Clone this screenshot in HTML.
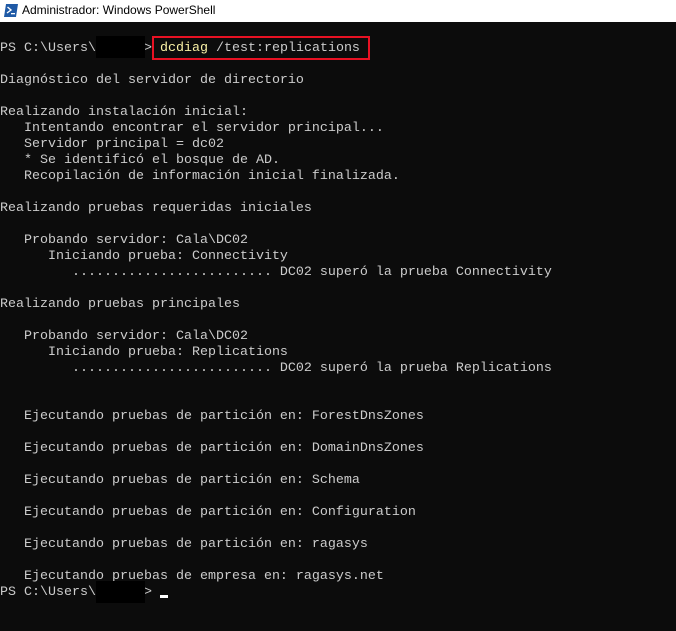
<!DOCTYPE html>
<html><head><meta charset="utf-8"><style>
html,body{margin:0;padding:0;}
body{width:676px;height:631px;background:#0c0c0c;position:relative;overflow:hidden;}
.title{position:absolute;left:0;top:0;width:676px;height:22px;background:#fff;}
.title span{position:absolute;left:22px;top:3px;font:12px "Liberation Sans",sans-serif;color:#000;}
pre{position:absolute;left:0;top:25px;margin:0;font-family:"Liberation Mono",monospace;font-size:13.33px;line-height:16px;color:#cccccc;letter-spacing:0;}
.red{position:absolute;left:152px;top:36px;width:214px;height:20px;border:2px solid #e81123;}
.blk{position:absolute;left:96px;width:49px;height:22px;background:#000;}
.cur{position:absolute;left:160px;top:595px;width:8px;height:3px;background:#fff;}
</style></head><body>
<div class="title">
<svg style="position:absolute;left:4px;top:4px" width="14" height="13" viewBox="0 0 14 13"><polygon points="2,0 14,0 12,13 0,13" fill="#1f5aa6"/><path d="M3.5,3 L7,6 L3,9" stroke="#fff" stroke-width="1.4" fill="none"/><rect x="7" y="9" width="4" height="1.3" fill="#fff"/></svg>
<span>Administrador: Windows PowerShell</span></div>
<pre>

PS C:\Users\      &gt; <span style="color:#f9f1a5">dcdiag</span> /test:replications

Diagnóstico del servidor de directorio

Realizando instalación inicial:
   Intentando encontrar el servidor principal...
   Servidor principal = dc02
   * Se identificó el bosque de AD.
   Recopilación de información inicial finalizada.

Realizando pruebas requeridas iniciales

   Probando servidor: Cala\DC02
      Iniciando prueba: Connectivity
         ......................... DC02 superó la prueba Connectivity

Realizando pruebas principales

   Probando servidor: Cala\DC02
      Iniciando prueba: Replications
         ......................... DC02 superó la prueba Replications


   Ejecutando pruebas de partición en: ForestDnsZones

   Ejecutando pruebas de partición en: DomainDnsZones

   Ejecutando pruebas de partición en: Schema

   Ejecutando pruebas de partición en: Configuration

   Ejecutando pruebas de partición en: ragasys

   Ejecutando pruebas de empresa en: ragasys.net
PS C:\Users\      &gt;
</pre>
<div class="red"></div>
<div class="blk" style="top:36px"></div>
<div class="blk" style="top:581px"></div>
<div class="cur"></div>
</body></html>
